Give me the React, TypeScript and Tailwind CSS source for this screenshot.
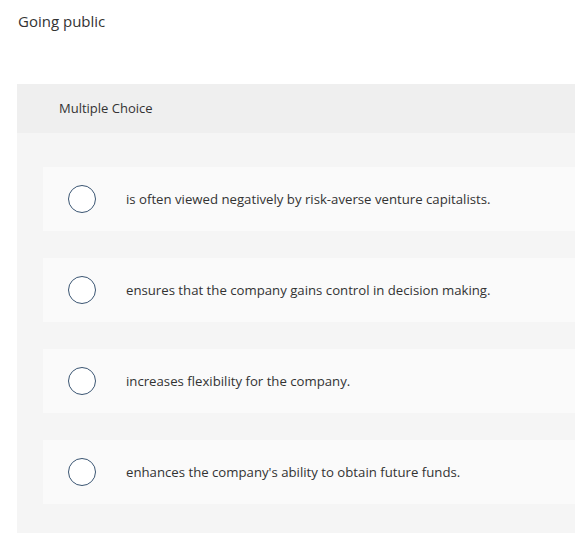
const options = [
  "is often viewed negatively by risk-averse venture capitalists.",
  "ensures that the company gains control in decision making.",
  "increases flexibility for the company.",
  "enhances the company's ability to obtain future funds.",
];

export default function App() {
  return (
    <div className="w-[575px] h-[533px] overflow-hidden bg-white text-[#333] font-['Open_Sans',sans-serif]">
      <h1 className="pl-[18px] pt-[11px] text-[15px] leading-[20px] font-normal">Going public</h1>

      <div className="ml-[17px] mt-[53px] bg-[#f5f5f5] h-[500px]">
        <div className="h-[49px] bg-[#efefef] pl-[42px] flex items-center text-[13px] pt-[1px]">
          Multiple Choice
        </div>

        <div className="pt-[34px] pl-[26px] flex flex-col gap-[27px]">
          {options.map((text) => (
            <label key={text} className="h-[64px] bg-[#fafafa] flex items-center cursor-pointer">
              <span className="ml-[25px] w-[28px] h-[28px] rounded-full border-[1.5px] border-[#3a5572] bg-white shrink-0" />
              <span className="ml-[30px] text-[13.2px] pt-[2px]">{text}</span>
            </label>
          ))}
        </div>
      </div>
    </div>
  );
}
